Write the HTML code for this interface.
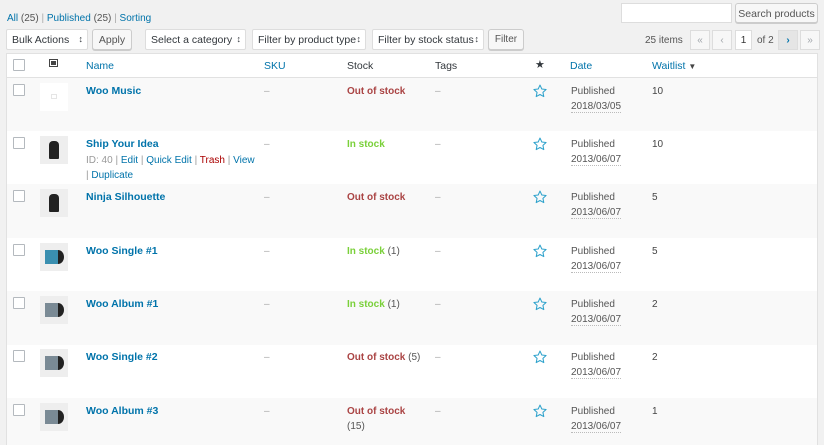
<!DOCTYPE html>
<html><head><meta charset="utf-8"><style>
*{box-sizing:border-box;margin:0;padding:0}
body{width:824px;height:445px;background:#f1f1f1;font-family:"Liberation Sans",sans-serif;font-size:10px;color:#444;position:relative;overflow:hidden}
.a{position:absolute;white-space:nowrap}
a,.l{color:#0073aa;text-decoration:none}
.sel{position:absolute;top:29px;height:21px;background:#fff;border:1px solid #ddd;border-radius:2px;padding:4px 5px;color:#32373c;font-size:10.5px}
.sel:after{content:"\2195";position:absolute;right:4px;top:4px;font-size:9px}
.btn{position:absolute;height:21px;background:#f7f7f7;border:1px solid #ccc;border-radius:3px;box-shadow:0 1px 0 #ccc;color:#555;font-size:10px;text-align:center;padding-top:4px}
.pg{position:absolute;top:30px;width:20px;height:20px;border:1px solid #ddd;background:#f7f7f7;color:#a0a5aa;text-align:center;font-size:10px;padding-top:4px}
.table{position:absolute;left:6px;top:53px;width:812px;height:392px;background:#fff;border:1px solid #e1e1e1}
.row{position:absolute;left:7px;width:810px}
.odd{background:#f9f9f9}
.cb{position:absolute;left:13px;width:12px;height:12px;border:1px solid #b4b9be;background:#fff;border-radius:1px}
.th{position:absolute;left:40px;width:28px;height:28px;background:#eee}
.name{font-weight:bold;color:#0073aa;font-size:10.5px}
.out{color:#a44;font-weight:bold}
.in{color:#7ad03a;font-weight:bold}
.dt{border-bottom:1px dotted #bbb}
.star{position:absolute;left:533px;width:14px;height:14px}
</style></head><body>
<div class="a" style="left:7px;top:13px"><a>All</a> <span style="color:#555">(25)</span> <span style="color:#aaa">|</span> <a>Published</a> <span style="color:#555">(25)</span> <span style="color:#aaa">|</span> <a>Sorting</a></div>
<div class="a" style="left:621px;top:3px;width:111px;height:20px;background:#fff;border:1px solid #ddd"></div>
<div class="btn" style="left:735px;top:3px;width:83px;height:20px;padding-top:4px;font-size:10.5px">Search products</div>
<div class="sel" style="left:6px;width:82px">Bulk Actions</div>
<div class="btn" style="left:92px;top:29px;width:40px;font-size:10.5px">Apply</div>
<div class="sel" style="left:145px;width:101px">Select a category</div>
<div class="sel" style="left:252px;width:114px">Filter by product type</div>
<div class="sel" style="left:372px;width:112px">Filter by stock status</div>
<div class="btn" style="left:488px;top:29px;width:36px">Filter</div>
<div class="a" style="left:645px;top:35px;color:#555">25 items</div>
<div class="pg" style="left:690px">«</div>
<div class="pg" style="left:712px">‹</div>
<div class="a" style="left:735px;top:30px;width:17px;height:20px;background:#fff;border:1px solid #ddd;text-align:center;padding-top:4px;color:#333">1</div>
<div class="a" style="left:757px;top:35px;color:#555">of 2</div>
<div class="pg" style="left:778px;background:#e5e5e5;color:#0073aa;font-weight:bold">›</div>
<div class="pg" style="left:800px">»</div>

<div class="table"></div>
<div class="row" style="top:77px;height:1px;background:#e1e1e1"></div>
<div class="cb" style="top:59px"></div>
<div class="a" style="left:49px;top:59px;width:9px;height:8px;background:#444;border:1px solid #444;box-shadow:inset 0 0 0 1px #fff"></div>
<div class="a l" style="left:86px;top:60px;font-size:10.5px">Name</div>
<div class="a l" style="left:264px;top:60px;font-size:10.5px">SKU</div>
<div class="a" style="left:347px;top:60px;font-size:10.5px;color:#32373c">Stock</div>
<div class="a" style="left:435px;top:60px;font-size:10.5px;color:#32373c">Tags</div>
<div class="a" style="left:535px;top:58px;font-size:11px;color:#32373c">★</div>
<div class="a l" style="left:570px;top:60px;font-size:10.5px">Date</div>
<div class="a l" style="left:652px;top:60px;font-size:10.5px">Waitlist <span style="color:#444;font-size:8px">▼</span></div>

<div class="row odd" style="top:78px;height:53px"></div>
<div class="row odd" style="top:184px;height:54px"></div>
<div class="row odd" style="top:291px;height:54px"></div>
<div class="row odd" style="top:398px;height:47px"></div>

<div id="rows"></div>
<script>
var R=[
[86,"Woo Music","out","Out of stock","","2018/03/05","10","#fff"],
[139,"Ship Your Idea","in","In stock","","2013/06/07","10","#ddd"],
[192,"Ninja Silhouette","out","Out of stock","","2013/06/07","5","#ddd"],
[246,"Woo Single #1","in","In stock"," <span style='color:#555'>(1)</span>","2013/06/07","5","#ddd"],
[299,"Woo Album #1","in","In stock"," <span style='color:#555'>(1)</span>","2013/06/07","2","#ddd"],
[352,"Woo Single #2","out","Out of stock"," <span style='color:#555'>(5)</span>","2013/06/07","2","#ddd"],
[406,"Woo Album #3","out","Out of stock","<br><span style='color:#555;line-height:15px'>(15)</span>","2013/06/07","1","#ddd"]];
var h="";
R.forEach(function(r,i){var t=r[0];
h+='<div class="cb" style="top:'+(t-2)+'px"></div>';
h+='<div class="th" style="top:'+(t-3)+'px;background:'+(i==0?'#fff':'#eee')+'">'+(i==0?'<div style="position:absolute;left:11px;top:11px;width:6px;height:5px;border:1px solid #e5e5e5"></div>':(i<3?'<div style="position:absolute;left:9px;top:5px;width:10px;height:18px;background:#222;border-radius:4px 4px 1px 1px"></div>':'<div style="position:absolute;left:12px;top:7px;width:12px;height:14px;background:#222;border-radius:50%"></div><div style="position:absolute;left:5px;top:7px;width:13px;height:14px;background:'+(i==3?'#3a8fb0':'#7a8a95')+'"></div>'))+'</div>';
h+='<div class="a name" style="left:86px;top:'+(t-1)+'px">'+r[1]+'</div>';
h+='<div class="a" style="left:264px;top:'+t+'px;color:#aaa">–</div>';
h+='<div class="a" style="left:347px;top:'+t+'px;line-height:15px;margin-top:-2px"><span class="'+r[2]+'">'+r[3]+'</span>'+r[4]+'</div>';
h+='<div class="a" style="left:435px;top:'+t+'px;color:#aaa">–</div>';
h+='<svg class="star a" style="top:'+(t-2)+'px" viewBox="0 0 20 20"><path d="M10 1.5l2.6 5.6 6.1.7-4.5 4.2 1.2 6-5.4-3-5.4 3 1.2-6L1.3 7.8l6.1-.7z" fill="none" stroke="#2ea2cc" stroke-width="1.5" stroke-linejoin="round"/></svg>';
h+='<div class="a" style="left:571px;top:'+(t-2)+'px;line-height:15px;color:#555">Published<br><span class="dt">'+r[5]+'</span></div>';
h+='<div class="a" style="left:652px;top:'+t+'px;color:#444">'+r[6]+'</div>';
});
document.getElementById("rows").innerHTML=h;
</script>
<div class="a" style="left:86px;top:153px;line-height:15px;color:#999">ID: 40 | <a>Edit</a> | <a>Quick Edit</a> | <span style="color:#a00">Trash</span> | <a>View</a><br>| <a>Duplicate</a></div>
</body></html>
